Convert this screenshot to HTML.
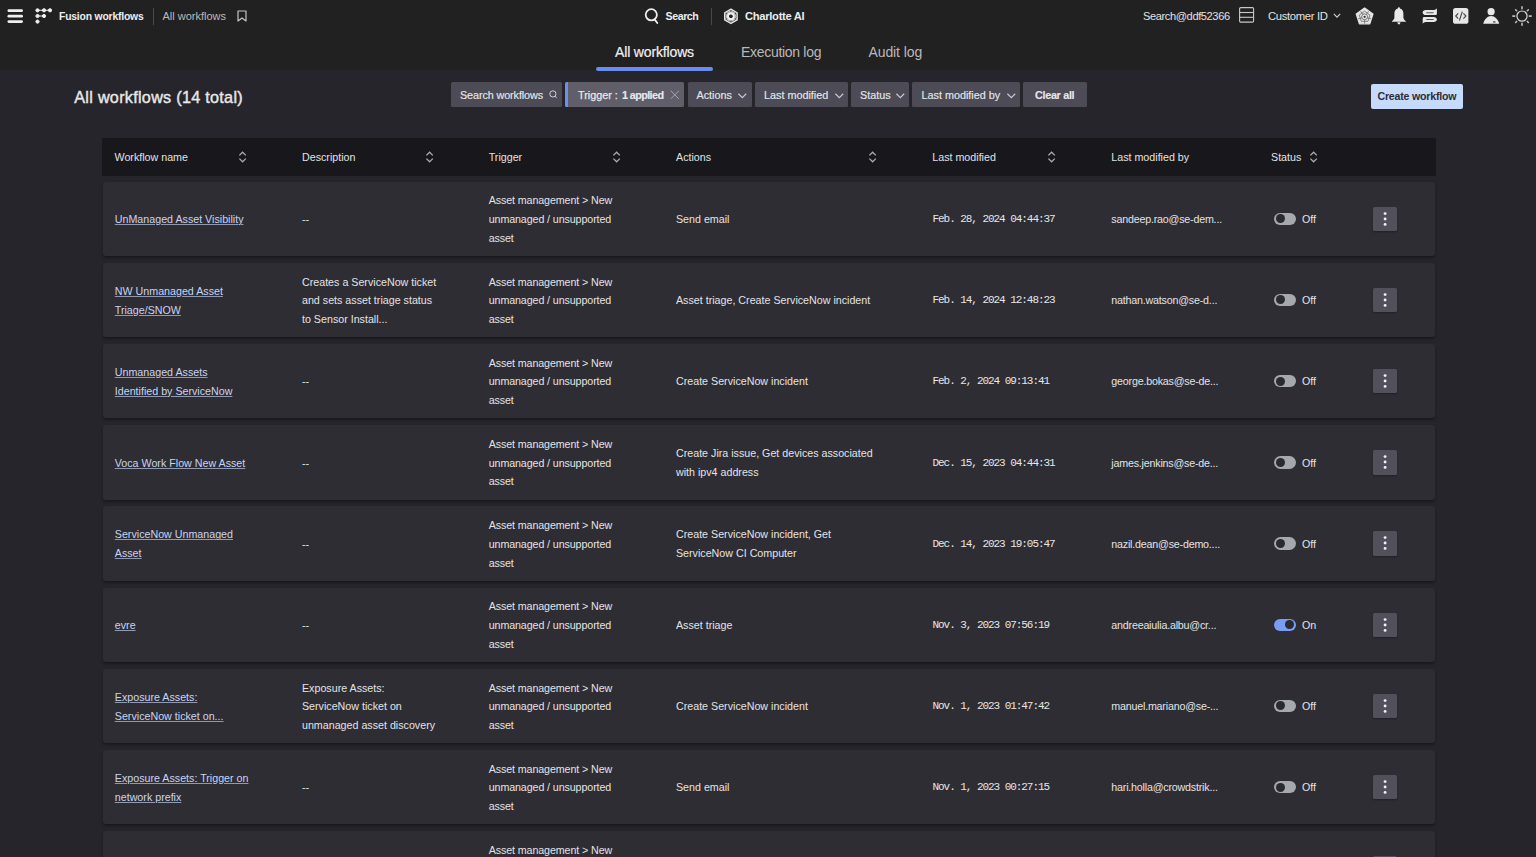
<!DOCTYPE html>
<html><head><meta charset="utf-8">
<style>
*{box-sizing:border-box;margin:0;padding:0}
html,body{width:1536px;height:857px;overflow:hidden;background:#26252b;font-family:"Liberation Sans",sans-serif;color:#e4e4e6}
.abs{position:absolute}
#hdr{position:absolute;left:0;top:0;width:1536px;height:70.3px;background:#212121}
.t{position:absolute;white-space:nowrap;line-height:1}
svg{position:absolute;overflow:visible}
.chip{position:absolute;top:82.2px;height:25px;background:#4c4b56;border-radius:1.5px;color:#e6e6ea;font-size:10.8px;line-height:26.6px;white-space:nowrap}
.chip span{position:absolute;top:0;-webkit-text-stroke:0.15px #e6e6ea}
.thd{position:absolute;left:102px;top:138.1px;width:1334px;height:37.5px;background:#18171c;border-radius:1px}
.th{position:absolute;top:151.6px;font-size:10.7px;color:#e2e2e4;white-space:nowrap;line-height:11px}
.row{position:absolute;left:102.8px;width:1332.5px;height:74.5px;background:#2e2d33;border-radius:3px;box-shadow:0 2px 3px rgba(0,0,0,.35)}
.cell{position:absolute;font-size:10.7px;line-height:18.75px;color:#e3e3e6;white-space:nowrap}
.lnk{color:#c9d4f2;text-decoration:underline;text-decoration-color:#9099b0;text-underline-offset:1px;text-decoration-thickness:1px}
.mono{font-family:"Liberation Mono",monospace;font-size:11px;letter-spacing:-1.05px;color:#e6e6e8}
.em{letter-spacing:-0.2px}
.trg{letter-spacing:-0.1px}
.tog{position:absolute;left:1171.1px;width:22.3px;height:12.5px;border-radius:7px;background:#a5a8ac}
.tog i{position:absolute;top:1.75px;left:1.75px;width:9px;height:9px;border-radius:50%;background:#2b2a30}
.tog.on{background:#7c9bf5}
.tog.on i{left:11.5px}
.kb{position:absolute;left:1270.3px;width:24.2px;height:24.5px;background:#51505b;border-radius:1.5px;box-shadow:0 1px 2px rgba(0,0,0,.3)}
.kb i{position:absolute;left:10.7px;width:2.8px;height:2.8px;border-radius:50%;background:#f2f2f2}
</style></head><body>
<div id="hdr">
  <!-- hamburger -->
  <svg style="left:0;top:0" width="60" height="32">
    <rect x="7.5" y="9.3" width="15.5" height="2.8" rx="1.4" fill="#f0f0f0"/>
    <rect x="7.5" y="14.8" width="15.5" height="2.8" rx="1.4" fill="#f0f0f0"/>
    <rect x="7.5" y="20.2" width="15.5" height="2.8" rx="1.4" fill="#f0f0f0"/>
  </svg>
  <!-- logo dots -->
  <svg style="left:0;top:0" width="60" height="32" fill="#f0f0f0" stroke="#f0f0f0">
    <circle cx="37.5" cy="10.3" r="1.6"/><circle cx="44" cy="10.3" r="1.6"/><circle cx="50" cy="10.3" r="1.6"/>
    <line x1="37.5" y1="10.3" x2="50" y2="10.3" stroke-width="1"/>
    <circle cx="37.5" cy="16" r="1.6"/><circle cx="44" cy="16" r="1.6"/>
    <line x1="37.5" y1="16" x2="44" y2="16" stroke-width="1"/>
    <circle cx="37.5" cy="21.6" r="1.6"/>
  </svg>
  <div class="t" style="left:59px;top:11.6px;font-size:10.4px;font-weight:700;color:#ececec;letter-spacing:-0.2px">Fusion workflows</div>
  <div class="abs" style="left:153px;top:8px;width:1px;height:17px;background:#4a4a4a"></div>
  <div class="t" style="left:162.5px;top:11px;font-size:11px;color:#b9b9b9">All workflows</div>
  <svg style="left:237px;top:10px" width="10" height="12"><path d="M1 1 H9 V11 L5 8 L1 11 Z" fill="none" stroke="#c4c4c4" stroke-width="1.2" stroke-linejoin="round"/></svg>

  <!-- center search -->
  <svg style="left:0;top:0" width="1" height="1"><circle cx="651.3" cy="14.8" r="5.6" fill="none" stroke="#ededed" stroke-width="1.8"/><path d="M654.6 19.4 L657.3 23" stroke="#ededed" stroke-width="1.8" stroke-linecap="round"/></svg>
  <div class="t" style="left:665.5px;top:10.8px;font-size:10.6px;font-weight:700;color:#ececec;letter-spacing:-0.4px">Search</div>
  <div class="abs" style="left:711px;top:8px;width:1px;height:16.5px;background:#484848"></div>
  <svg style="left:0;top:0" width="1" height="1"><polygon points="730.90,9.10 737.14,12.70 737.14,19.90 730.90,23.50 724.66,19.90 724.66,12.70" fill="none" stroke="#e8e8e8" stroke-width="1.3" stroke-linejoin="round"/><polygon points="733.50,11.80 736.10,16.30 733.50,20.80 728.30,20.80 725.70,16.30 728.30,11.80" fill="none" stroke="#d8d8d8" stroke-width="0.8"/><path d="M730.90 9.10 L737.14 19.90 M737.14 12.70 L730.90 23.50 M737.14 19.90 L724.66 19.90 M730.90 23.50 L724.66 12.70 M724.66 19.90 L730.90 9.10 M724.66 12.70 L737.14 12.70 " stroke="#cfcfcf" stroke-width="0.7" fill="none"/><circle cx="730.9" cy="16.3" r="2.9" fill="none" stroke="#eeeeee" stroke-width="2.2"/><circle cx="730.9" cy="16.3" r="1.6" fill="#212121"/></svg>
  <div class="t" style="left:745px;top:11px;font-size:11.2px;font-weight:700;color:#ececec;letter-spacing:-0.3px">Charlotte AI</div>

  <!-- right header -->
  <div class="t" style="left:1143px;top:11px;font-size:11.1px;color:#e2e2e2;letter-spacing:-0.4px">Search@ddf52366</div>
  <svg style="left:1239px;top:7px" width="16" height="16" fill="none" stroke="#c8c8c8" stroke-width="1.1">
    <rect x="0.6" y="0.6" width="14" height="14.5" rx="1.2"/>
    <line x1="0.6" y1="5.5" x2="14.6" y2="5.5"/><line x1="0.6" y1="10.3" x2="14.6" y2="10.3"/>
  </svg>
  <div class="t" style="left:1268px;top:11px;font-size:11.3px;color:#e2e2e2;letter-spacing:-0.35px">Customer ID</div>
  <svg style="left:1333px;top:13px" width="9" height="6"><path d="M0.8 0.8 L4 4.2 L7.2 0.8" fill="none" stroke="#d0d0d0" stroke-width="1.1"/></svg>
  <!-- pentagon --><svg style="left:0;top:0" width="1" height="1"><polygon points="1364.60,8.10 1372.87,14.11 1369.71,23.84 1359.49,23.84 1356.33,14.11" fill="#e4e4e4" stroke="#e4e4e4" stroke-width="1.4" stroke-linejoin="round"/><polygon points="1364.60,11.20 1369.93,15.07 1367.89,21.33 1361.31,21.33 1359.27,15.07" fill="none" stroke="#6a6a6a" stroke-width="0.8"/><path d="M1366.25 14.53 L1368.60 11.30 M1367.26 17.67 L1371.07 18.90 M1364.60 19.60 L1364.60 23.60 M1361.94 17.67 L1358.13 18.90 M1362.95 14.53 L1360.60 11.30 " stroke="#6a6a6a" stroke-width="0.8"/><circle cx="1364.6" cy="16.8" r="2.9" fill="#e8e8e8" stroke="#5a5a5a" stroke-width="0.8"/><circle cx="1364.6" cy="16.8" r="1.15" fill="#333"/></svg>
  <!-- bell --><svg style="left:0;top:0" width="1" height="1"><path d="M1398.9 7.3 C1399.7 7.3 1400 7.9 1400 8.6 C1402.6 9.3 1403.4 11.4 1403.4 14 V17.4 C1403.4 19 1404.5 20 1405.9 21.3 V21.7 H1391.9 V21.3 C1393.3 20 1394.4 19 1394.4 17.4 V14 C1394.4 11.4 1395.2 9.3 1397.8 8.6 C1397.8 7.9 1398.1 7.3 1398.9 7.3Z" fill="#e8e8e8"/><path d="M1397.4 22.3 H1400.4 C1400.4 23.5 1399.8 24.4 1398.9 24.4 C1398 24.4 1397.4 23.5 1397.4 22.3Z" fill="#e8e8e8"/></svg>
  <!-- chat --><svg style="left:0;top:0" width="1" height="1"><path d="M1425.8 9.9 H1434 C1435 9.9 1436.2 9.2 1436.9 8.3 V13.4 C1436.9 14.4 1436.2 15.1 1435.2 15.1 H1425.8 C1424 15.1 1422.6 14 1422.6 12.5 C1422.6 11 1424 9.9 1425.8 9.9Z" fill="#e8e8e8"/><path d="M1424.3 16.9 H1433.7 C1435.5 16.9 1436.9 18 1436.9 19.5 C1436.9 21 1435.5 22 1433.7 22 H1425.6 C1424.6 22 1423.4 22.8 1422.7 23.7 V18.6 C1422.7 17.6 1423.4 16.9 1424.3 16.9Z" fill="#e8e8e8"/><path d="M1426.7 12.7 H1433.2 M1426.7 19.5 H1433.2" stroke="#555" stroke-width="1.1" stroke-linecap="round"/></svg>
  <!-- code --><svg style="left:0;top:0" width="1" height="1"><rect x="1453" y="8.1" width="15.4" height="15.7" rx="2.6" fill="#e6e6e6"/><path d="M1458.2 13.4 L1455.7 16 L1458.2 18.6 M1463.4 13.4 L1465.9 16 L1463.4 18.6 M1462.3 11.6 L1459.4 20.5" fill="none" stroke="#444" stroke-width="1.1"/></svg>
  <!-- person --><svg style="left:0;top:0" width="1" height="1"><circle cx="1491.1" cy="11.7" r="3.6" fill="#e8e8e8"/><path d="M1483.2 23.8 C1484.6 19.3 1487.4 16.1 1491.1 16.1 C1494.8 16.1 1497.8 19.3 1499.2 23.8 Z" fill="#e8e8e8"/><rect x="1493.1" y="21.2" width="2.3" height="1.5" fill="#555"/></svg>
  <!-- sun --><svg style="left:0;top:0" width="1" height="1"><circle cx="1522" cy="16.1" r="5.1" fill="none" stroke="#d8d8d8" stroke-width="1.2"/><path d="M1522.00 8.80 L1522.00 6.90 M1527.37 10.73 L1528.36 9.74 M1529.30 16.10 L1531.20 16.10 M1527.37 21.47 L1528.36 22.46 M1522.00 23.40 L1522.00 25.30 M1516.63 21.47 L1515.64 22.46 M1514.70 16.10 L1512.80 16.10 M1516.63 10.73 L1515.64 9.74 " stroke="#bdbdbd" stroke-width="1.6" stroke-linecap="round"/></svg>

  <!-- tabs -->
  <div class="t" style="left:615px;top:44.6px;font-size:14px;color:#f0f0f0;letter-spacing:-0.15px;-webkit-text-stroke:0.2px #f0f0f0">All workflows</div>
  <div class="t" style="left:741px;top:44.6px;font-size:14px;color:#b9b9bb;letter-spacing:-0.3px">Execution log</div>
  <div class="t" style="left:868.5px;top:44.6px;font-size:14px;color:#b9b9bb;letter-spacing:-0.1px">Audit log</div>
  <div class="abs" style="left:596px;top:66.6px;width:117px;height:4.1px;background:#6a8cf2;border-radius:2px;z-index:2"></div>
</div>

<!-- title -->
<div class="t" style="left:74.3px;top:89.2px;font-size:16.2px;letter-spacing:0.28px;color:#e8e8ea;-webkit-text-stroke:0.4px #e8e8ea">All workflows (14 total)</div>

<!-- filters -->
<div class="chip" style="left:451px;width:111px"><span style="left:9px;letter-spacing:-0.1px">Search workflows</span>
  <svg style="left:98px;top:8px" width="9" height="9"><circle cx="3.9" cy="3.9" r="3.1" fill="none" stroke="#d0d0d6" stroke-width="1"/><line x1="6" y1="6.1" x2="7.6" y2="8" stroke="#d0d0d6" stroke-width="1"/></svg>
</div>
<div class="chip" style="left:565px;width:119px;background:#5f5e69;border-left:3px solid #6d8df0"><span style="left:10px;color:#e8e8ec"><span style="position:static;-webkit-text-stroke:0.25px #e8e8ec">Trigger :</span>&nbsp;<b style="font-weight:700;letter-spacing:-0.6px;margin-left:1.2px">1 applied</b></span>
  <svg style="left:102px;top:7.5px" width="10" height="10"><path d="M0.8 0.8 L8.8 8.8 M8.8 0.8 L0.8 8.8" stroke="#a6a6ae" stroke-width="1"/></svg>
</div>
<div class="chip" style="left:687.5px;width:64px"><span style="left:9px">Actions</span>
  <svg style="left:50px;top:11.3px" width="9" height="6"><path d="M0.4 0.8 L4.3 4.6 L8.2 0.8" fill="none" stroke="#c9c9cf" stroke-width="1.2"/></svg></div>
<div class="chip" style="left:754.5px;width:93px"><span style="left:9.5px">Last modified</span>
  <svg style="left:80px;top:11.3px" width="9" height="6"><path d="M0.4 0.8 L4.3 4.6 L8.2 0.8" fill="none" stroke="#c9c9cf" stroke-width="1.2"/></svg></div>
<div class="chip" style="left:851px;width:58px"><span style="left:9px">Status</span>
  <svg style="left:45.2px;top:11.3px" width="9" height="6"><path d="M0.4 0.8 L4.3 4.6 L8.2 0.8" fill="none" stroke="#c9c9cf" stroke-width="1.2"/></svg></div>
<div class="chip" style="left:912px;width:107.5px"><span style="left:9.5px">Last modified by</span>
  <svg style="left:95px;top:11.3px" width="9" height="6"><path d="M0.4 0.8 L4.3 4.6 L8.2 0.8" fill="none" stroke="#c9c9cf" stroke-width="1.2"/></svg></div>
<div class="chip" style="left:1023px;width:64px;font-weight:700"><span style="left:12px;letter-spacing:-0.3px">Clear all</span></div>

<div class="abs" style="left:1371px;top:84px;width:92.3px;height:24.8px;background:#c6dbfb;border-radius:2px;color:#26252e;font-size:10.6px;font-weight:700;line-height:24.8px;white-space:nowrap;letter-spacing:-0.2px;color:#2c2c36"><span style="position:absolute;left:6.5px">Create workflow</span></div>

<!-- table header -->
<div class="thd"></div>
<div class="th" style="left:114.5px">Workflow name</div>
<div class="th" style="left:302px">Description</div>
<div class="th" style="left:488.7px">Trigger</div>
<div class="th" style="left:676px">Actions</div>
<div class="th" style="left:932.3px">Last modified</div>
<div class="th" style="left:1111.3px">Last modified by</div>
<div class="th" style="left:1271px">Status</div>
<svg style="left:238.7px;top:150.5px" width="10" height="13"><path d="M0.4 4.4 L3.6 1.2 L6.8 4.4 M0.4 7.6 L3.6 10.8 L6.8 7.6" fill="none" stroke="#ababb0" stroke-width="1.3"/></svg>
<svg style="left:426.2px;top:150.5px" width="10" height="13"><path d="M0.4 4.4 L3.6 1.2 L6.8 4.4 M0.4 7.6 L3.6 10.8 L6.8 7.6" fill="none" stroke="#ababb0" stroke-width="1.3"/></svg>
<svg style="left:613.2px;top:150.5px" width="10" height="13"><path d="M0.4 4.4 L3.6 1.2 L6.8 4.4 M0.4 7.6 L3.6 10.8 L6.8 7.6" fill="none" stroke="#ababb0" stroke-width="1.3"/></svg>
<svg style="left:869.2px;top:150.5px" width="10" height="13"><path d="M0.4 4.4 L3.6 1.2 L6.8 4.4 M0.4 7.6 L3.6 10.8 L6.8 7.6" fill="none" stroke="#ababb0" stroke-width="1.3"/></svg>
<svg style="left:1048.2px;top:150.5px" width="10" height="13"><path d="M0.4 4.4 L3.6 1.2 L6.8 4.4 M0.4 7.6 L3.6 10.8 L6.8 7.6" fill="none" stroke="#ababb0" stroke-width="1.3"/></svg>
<svg style="left:1310.2px;top:150.5px" width="10" height="13"><path d="M0.4 4.4 L3.6 1.2 L6.8 4.4 M0.4 7.6 L3.6 10.8 L6.8 7.6" fill="none" stroke="#ababb0" stroke-width="1.3"/></svg>

<div id="rows"><div class="row" style="top:181.50px"><div class="cell" style="left:12px;top:28.58px"><span class="lnk">UnManaged Asset Visibility</span></div><div class="cell" style="left:199.2px;top:28.58px">--</div><div class="cell trg" style="left:385.9px;top:9.83px">Asset management &gt; New<br>unmanaged / unsupported<br>asset</div><div class="cell" style="left:573.2px;top:28.58px">Send email</div><div class="cell mono" style="left:829.7px;top:28.58px">Feb. 28, 2024 04:44:37</div><div class="cell em" style="left:1008.5px;top:28.58px">sandeep.rao@se-dem...</div><div class="tog" style="top:31px"><i></i></div><div class="cell" style="left:1199.2px;top:28.58px">Off</div><div class="kb" style="top:25px"><svg width="24" height="24" style="left:0;top:0"><circle cx="12.1" cy="6.6" r="1.45" fill="#f2f2f2"/><circle cx="12.1" cy="12" r="1.45" fill="#f2f2f2"/><circle cx="12.1" cy="17.4" r="1.45" fill="#f2f2f2"/></svg></div></div>
<div class="row" style="top:262.70px"><div class="cell" style="left:12px;top:19.20px"><span class="lnk">NW Unmanaged Asset</span><br><span class="lnk">Triage/SNOW</span></div><div class="cell" style="left:199.2px;top:9.83px">Creates a ServiceNow ticket<br>and sets asset triage status<br>to Sensor Install...</div><div class="cell trg" style="left:385.9px;top:9.83px">Asset management &gt; New<br>unmanaged / unsupported<br>asset</div><div class="cell" style="left:573.2px;top:28.58px">Asset triage, Create ServiceNow incident</div><div class="cell mono" style="left:829.7px;top:28.58px">Feb. 14, 2024 12:48:23</div><div class="cell em" style="left:1008.5px;top:28.58px">nathan.watson@se-d...</div><div class="tog" style="top:31px"><i></i></div><div class="cell" style="left:1199.2px;top:28.58px">Off</div><div class="kb" style="top:25px"><svg width="24" height="24" style="left:0;top:0"><circle cx="12.1" cy="6.6" r="1.45" fill="#f2f2f2"/><circle cx="12.1" cy="12" r="1.45" fill="#f2f2f2"/><circle cx="12.1" cy="17.4" r="1.45" fill="#f2f2f2"/></svg></div></div>
<div class="row" style="top:343.90px"><div class="cell" style="left:12px;top:19.20px"><span class="lnk">Unmanaged Assets</span><br><span class="lnk">Identified by ServiceNow</span></div><div class="cell" style="left:199.2px;top:28.58px">--</div><div class="cell trg" style="left:385.9px;top:9.83px">Asset management &gt; New<br>unmanaged / unsupported<br>asset</div><div class="cell" style="left:573.2px;top:28.58px">Create ServiceNow incident</div><div class="cell mono" style="left:829.7px;top:28.58px">Feb. 2, 2024 09:13:41</div><div class="cell em" style="left:1008.5px;top:28.58px">george.bokas@se-de...</div><div class="tog" style="top:31px"><i></i></div><div class="cell" style="left:1199.2px;top:28.58px">Off</div><div class="kb" style="top:25px"><svg width="24" height="24" style="left:0;top:0"><circle cx="12.1" cy="6.6" r="1.45" fill="#f2f2f2"/><circle cx="12.1" cy="12" r="1.45" fill="#f2f2f2"/><circle cx="12.1" cy="17.4" r="1.45" fill="#f2f2f2"/></svg></div></div>
<div class="row" style="top:425.10px"><div class="cell" style="left:12px;top:28.58px"><span class="lnk">Voca Work Flow New Asset</span></div><div class="cell" style="left:199.2px;top:28.58px">--</div><div class="cell trg" style="left:385.9px;top:9.83px">Asset management &gt; New<br>unmanaged / unsupported<br>asset</div><div class="cell" style="left:573.2px;top:19.20px">Create Jira issue, Get devices associated<br>with ipv4 address</div><div class="cell mono" style="left:829.7px;top:28.58px">Dec. 15, 2023 04:44:31</div><div class="cell em" style="left:1008.5px;top:28.58px">james.jenkins@se-de...</div><div class="tog" style="top:31px"><i></i></div><div class="cell" style="left:1199.2px;top:28.58px">Off</div><div class="kb" style="top:25px"><svg width="24" height="24" style="left:0;top:0"><circle cx="12.1" cy="6.6" r="1.45" fill="#f2f2f2"/><circle cx="12.1" cy="12" r="1.45" fill="#f2f2f2"/><circle cx="12.1" cy="17.4" r="1.45" fill="#f2f2f2"/></svg></div></div>
<div class="row" style="top:506.30px"><div class="cell" style="left:12px;top:19.20px"><span class="lnk">ServiceNow Unmanaged</span><br><span class="lnk">Asset</span></div><div class="cell" style="left:199.2px;top:28.58px">--</div><div class="cell trg" style="left:385.9px;top:9.83px">Asset management &gt; New<br>unmanaged / unsupported<br>asset</div><div class="cell" style="left:573.2px;top:19.20px">Create ServiceNow incident, Get<br>ServiceNow CI Computer</div><div class="cell mono" style="left:829.7px;top:28.58px">Dec. 14, 2023 19:05:47</div><div class="cell em" style="left:1008.5px;top:28.58px">nazil.dean@se-demo....</div><div class="tog" style="top:31px"><i></i></div><div class="cell" style="left:1199.2px;top:28.58px">Off</div><div class="kb" style="top:25px"><svg width="24" height="24" style="left:0;top:0"><circle cx="12.1" cy="6.6" r="1.45" fill="#f2f2f2"/><circle cx="12.1" cy="12" r="1.45" fill="#f2f2f2"/><circle cx="12.1" cy="17.4" r="1.45" fill="#f2f2f2"/></svg></div></div>
<div class="row" style="top:587.50px"><div class="cell" style="left:12px;top:28.58px"><span class="lnk">evre</span></div><div class="cell" style="left:199.2px;top:28.58px">--</div><div class="cell trg" style="left:385.9px;top:9.83px">Asset management &gt; New<br>unmanaged / unsupported<br>asset</div><div class="cell" style="left:573.2px;top:28.58px">Asset triage</div><div class="cell mono" style="left:829.7px;top:28.58px">Nov. 3, 2023 07:56:19</div><div class="cell em" style="left:1008.5px;top:28.58px">andreeaiulia.albu@cr...</div><div class="tog on" style="top:31px"><i></i></div><div class="cell" style="left:1199.2px;top:28.58px">On</div><div class="kb" style="top:25px"><svg width="24" height="24" style="left:0;top:0"><circle cx="12.1" cy="6.6" r="1.45" fill="#f2f2f2"/><circle cx="12.1" cy="12" r="1.45" fill="#f2f2f2"/><circle cx="12.1" cy="17.4" r="1.45" fill="#f2f2f2"/></svg></div></div>
<div class="row" style="top:668.70px"><div class="cell" style="left:12px;top:19.20px"><span class="lnk">Exposure Assets:</span><br><span class="lnk">ServiceNow ticket on...</span></div><div class="cell" style="left:199.2px;top:9.83px">Exposure Assets:<br>ServiceNow ticket on<br>unmanaged asset discovery</div><div class="cell trg" style="left:385.9px;top:9.83px">Asset management &gt; New<br>unmanaged / unsupported<br>asset</div><div class="cell" style="left:573.2px;top:28.58px">Create ServiceNow incident</div><div class="cell mono" style="left:829.7px;top:28.58px">Nov. 1, 2023 01:47:42</div><div class="cell em" style="left:1008.5px;top:28.58px">manuel.mariano@se-...</div><div class="tog" style="top:31px"><i></i></div><div class="cell" style="left:1199.2px;top:28.58px">Off</div><div class="kb" style="top:25px"><svg width="24" height="24" style="left:0;top:0"><circle cx="12.1" cy="6.6" r="1.45" fill="#f2f2f2"/><circle cx="12.1" cy="12" r="1.45" fill="#f2f2f2"/><circle cx="12.1" cy="17.4" r="1.45" fill="#f2f2f2"/></svg></div></div>
<div class="row" style="top:749.90px"><div class="cell" style="left:12px;top:19.20px"><span class="lnk">Exposure Assets: Trigger on</span><br><span class="lnk">network prefix</span></div><div class="cell" style="left:199.2px;top:28.58px">--</div><div class="cell trg" style="left:385.9px;top:9.83px">Asset management &gt; New<br>unmanaged / unsupported<br>asset</div><div class="cell" style="left:573.2px;top:28.58px">Send email</div><div class="cell mono" style="left:829.7px;top:28.58px">Nov. 1, 2023 00:27:15</div><div class="cell em" style="left:1008.5px;top:28.58px">hari.holla@crowdstrik...</div><div class="tog" style="top:31px"><i></i></div><div class="cell" style="left:1199.2px;top:28.58px">Off</div><div class="kb" style="top:25px"><svg width="24" height="24" style="left:0;top:0"><circle cx="12.1" cy="6.6" r="1.45" fill="#f2f2f2"/><circle cx="12.1" cy="12" r="1.45" fill="#f2f2f2"/><circle cx="12.1" cy="17.4" r="1.45" fill="#f2f2f2"/></svg></div></div>
<div class="row" style="top:831.10px"><div class="cell trg" style="left:385.9px;top:9.83px">Asset management &gt; New<br>unmanaged / unsupported<br>asset</div><div class="kb" style="top:25px"><svg width="24" height="24" style="left:0;top:0"><circle cx="12.1" cy="6.6" r="1.45" fill="#f2f2f2"/><circle cx="12.1" cy="12" r="1.45" fill="#f2f2f2"/><circle cx="12.1" cy="17.4" r="1.45" fill="#f2f2f2"/></svg></div></div></div>
</body></html>
